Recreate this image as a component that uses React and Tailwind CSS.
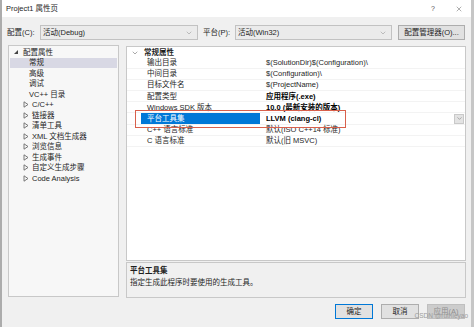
import { ChevronDown, X } from 'lucide-react'

const TREE = [
  { label: '常规', indent: true, selected: true },
  { label: '高级', indent: true },
  { label: '调试', indent: true },
  { label: 'VC++ 目录', indent: true },
  { label: 'C/C++', arrow: true },
  { label: '链接器', arrow: true },
  { label: '清单工具', arrow: true },
  { label: 'XML 文档生成器', arrow: true },
  { label: '浏览信息', arrow: true },
  { label: '生成事件', arrow: true },
  { label: '自定义生成步骤', arrow: true },
  { label: 'Code Analysis', arrow: true },
]

const PROPS = [
  { name: '输出目录', value: '$(SolutionDir)$(Configuration)\\' },
  { name: '中间目录', value: '$(Configuration)\\' },
  { name: '目标文件名', value: '$(ProjectName)' },
  { name: '配置类型', value: '应用程序(.exe)', bold: true },
  { name: 'Windows SDK 版本', value: '10.0 (最新安装的版本)', bold: true },
  { name: '平台工具集', value: 'LLVM (clang-cl)', bold: true, selected: true },
  { name: 'C++ 语言标准', value: '默认(ISO C++14 标准)' },
  { name: 'C 语言标准', value: '默认(旧 MSVC)' },
]

function Collapsed() {
  return (
    <svg width="6" height="7" viewBox="0 0 6 7" className="shrink-0">
      <path d="M1 0.8 L5 3.5 L1 6.2 Z" fill="none" stroke="#6b6b6b" strokeWidth="0.9" />
    </svg>
  )
}

function Expanded() {
  return (
    <svg width="6" height="6" viewBox="0 0 6 6" className="shrink-0">
      <path d="M5 1 L5 5 L1 5 Z" fill="#444" />
    </svg>
  )
}

function Combo({ text, className }) {
  return (
    <div className={`h-[15px] bg-[#ebebeb] border border-[#c2c2c2] flex items-center justify-between pl-[2px] pr-[4px] ${className}`}>
      <span>{text}</span>
      <ChevronDown size={8} strokeWidth={1.5} className="text-[#8a8a8a]" />
    </div>
  )
}

export default function App() {
  return (
    <div className="relative w-[474px] h-[327px] overflow-hidden bg-[#f0f0f0] border-l-2 border-l-[#acacac] border-r-[3px] border-r-[#c6c6c6] flex flex-col text-[7.5px] leading-none text-[#1e1e1e] font-['Liberation_Sans','Noto_Sans_CJK_SC',sans-serif]">
      {/* title bar */}
      <div className="h-[17px] bg-white flex items-center pl-[4px] pr-[8px] shrink-0">
        <span className="text-[7.5px]">Project1 属性页</span>
        <span className="ml-auto text-[7px] text-[#555] mr-[20px]">?</span>
        <X size={8} strokeWidth={1.3} className="text-[#444]" />
      </div>

      {/* config row */}
      <div className="flex items-center mt-[8px] pl-[5px] pr-[6px] h-[15px] shrink-0">
        <span className="w-[33px]">配置(C):</span>
        <Combo text="活动(Debug)" className="w-[158px]" />
        <span className="ml-[5px] w-[32px]">平台(P):</span>
        <Combo text="活动(Win32)" className="w-[157px]" />
        <div className="ml-auto w-[67px] h-[15px] bg-[#e1e1e1] border border-[#adadad] flex items-center justify-center">
          配置管理器(O)...
        </div>
      </div>

      {/* main panels */}
      <div className="flex gap-[7px] mt-[5px] pl-[6px] pr-[5px] h-[253px] shrink-0">
        {/* tree */}
        <div className="w-[111px] h-[252px] bg-[#f7f7f7] border border-[#c8c8c8] pt-[1px]">
          <div className="h-[10.5px] flex items-center gap-[4px] pl-[4px]">
            <Expanded />
            <span>配置属性</span>
          </div>
          {TREE.map(t => (
            <div
              key={t.label}
              className={`h-[10.5px] flex items-center gap-[3px] mx-[1px] ${t.selected ? 'bg-[#d8d8e4]' : ''} ${t.arrow ? 'pl-[13px]' : 'pl-[19px]'}`}
            >
              {t.arrow && <Collapsed />}
              <span>{t.label}</span>
            </div>
          ))}
        </div>

        {/* right */}
        <div className="flex-1 flex flex-col gap-[1px] pt-[1px]">
          <div className="h-[215px] bg-white border border-[#c8c8c8]">
            <div className="h-[11px] flex items-center pl-[4px] gap-[5px]">
              <ChevronDown size={8} strokeWidth={1.5} className="text-[#555]" />
              <span className="font-bold">常规属性</span>
            </div>
            {PROPS.map(p => (
              <div key={p.name} className="h-[11.1px] flex items-center border-b border-[#f3f3f3]">
                <div className="w-[14px] self-stretch" />
                <div className={`w-[119px] self-stretch flex items-center pl-[6px] ${p.selected ? 'bg-[#0078d7] text-white' : ''}`}>
                  {p.name}
                </div>
                <div className={`flex-1 pl-[6px] flex items-center ${p.bold ? 'font-bold text-black' : ''}`}>
                  <span>{p.value}</span>
                  {p.selected && (
                    <div className="ml-auto mr-[1px] w-[10px] h-[10px] bg-[#e3e3e3] border border-[#c9c9c9] flex items-center justify-center">
                      <ChevronDown size={7} strokeWidth={1.6} className="text-[#666]" />
                    </div>
                  )}
                </div>
              </div>
            ))}
          </div>
          <div className="h-[36px] border border-[#c8c8c8] px-[3px] pt-[4px] flex flex-col gap-[4px]">
            <span className="font-bold">平台工具集</span>
            <span>指定生成此程序时要使用的生成工具。</span>
          </div>
        </div>
      </div>

      {/* buttons */}
      <div className="flex justify-end gap-[8px] mt-[6px] pr-[6px]">
        <div className="w-[38px] h-[15px] bg-[#e1e1e1] border border-[#0078d7] flex items-center justify-center">确定</div>
        <div className="w-[38px] h-[15px] bg-[#e1e1e1] border border-[#adadad] flex items-center justify-center">取消</div>
        <div className="w-[38px] h-[15px] bg-[#cccccc] border border-[#bfbfbf] flex items-center justify-center text-[#8f8f8f]">应用(A)</div>
      </div>

      {/* annotation overlays */}
      <div className="absolute left-[133px] top-[110px] w-[211px] h-[18px] border-[1.5px] border-[#d8604c]" />
      <span className="absolute right-[3px] top-[313px] text-[6.5px] text-[#9d9d9d]">CSDN @ruthieyao</span>
    </div>
  )
}
